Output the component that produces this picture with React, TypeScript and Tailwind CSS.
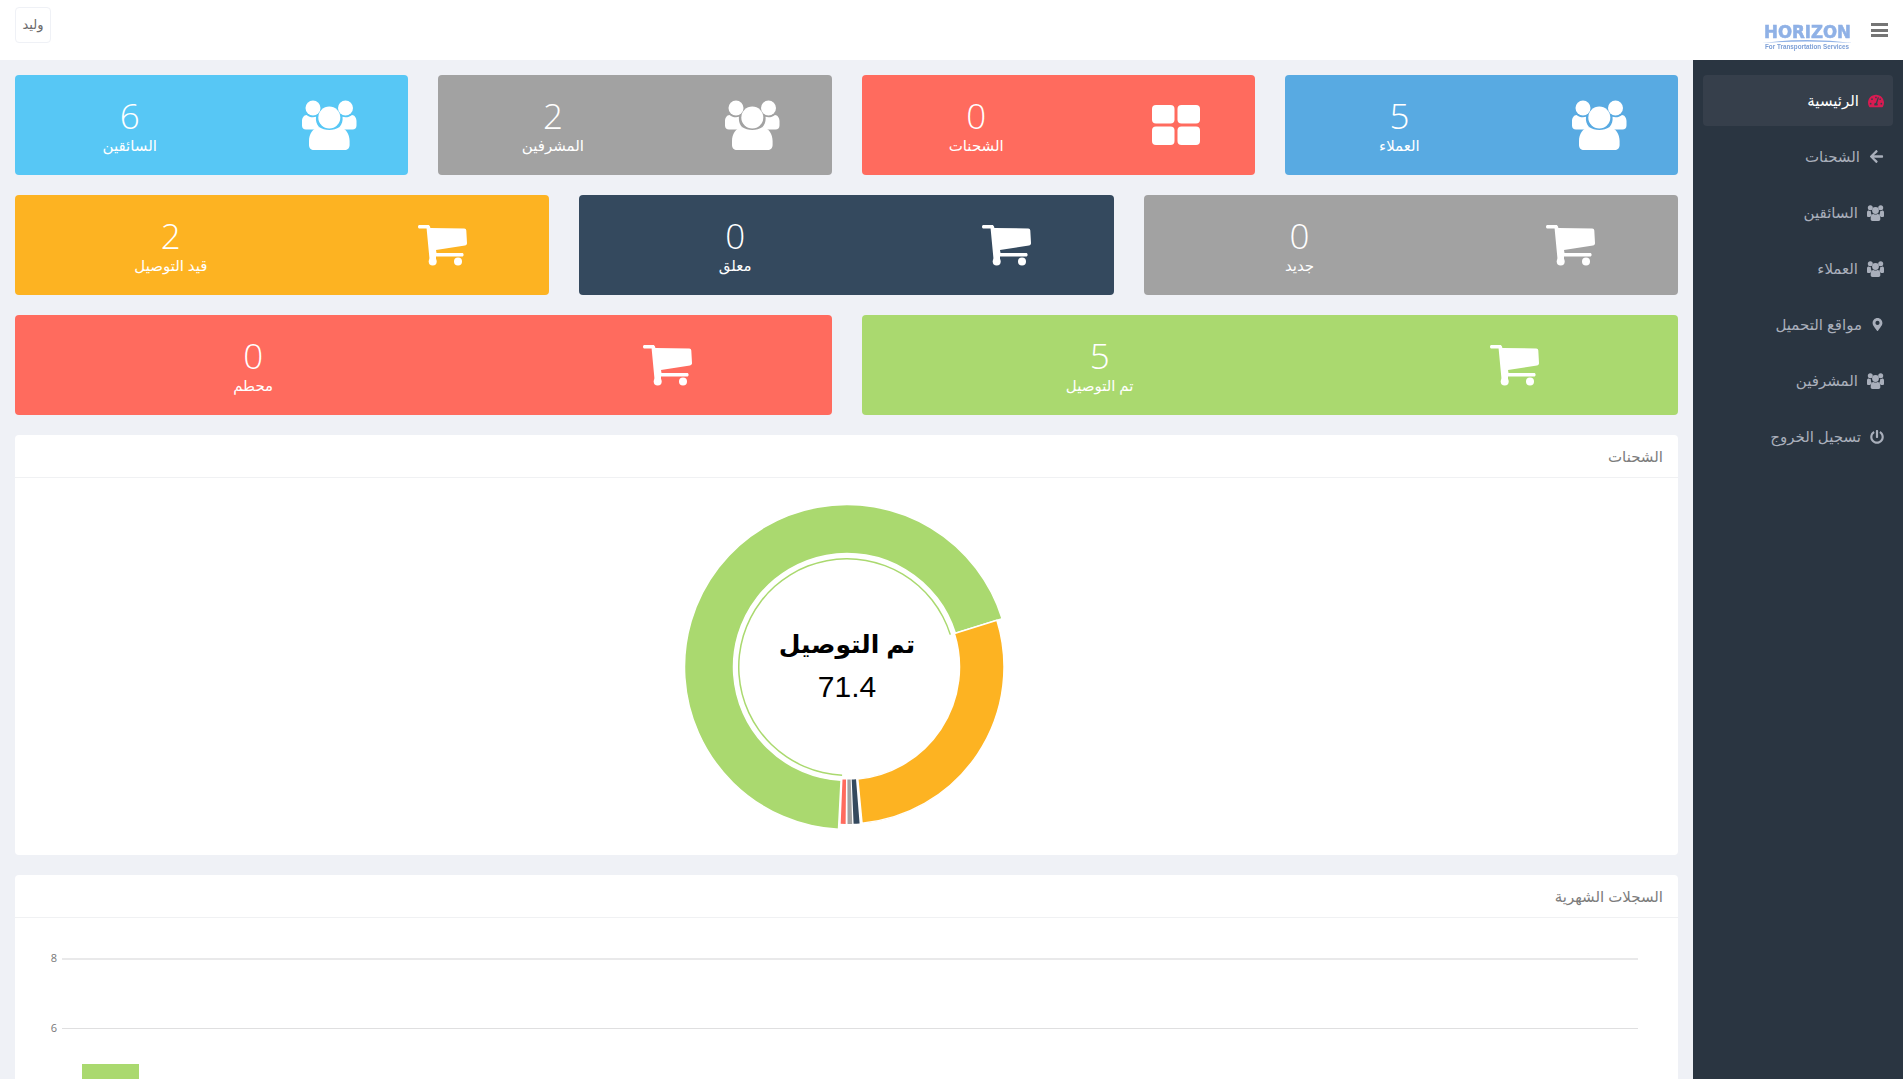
import { FaArrowLeft, FaMapMarkerAlt, FaPowerOff, FaTachometerAlt } from "react-icons/fa";

const FONT = "font-['Open_Sans','DejaVu_Sans',sans-serif]";

function GroupIcon() {
  return (
    <svg width="55" height="51" viewBox="0 0 55 51" fill="white">
      <circle cx="11" cy="8" r="7.500" />
      <circle cx="43.500" cy="8" r="7.500" />
      <path d="M0 21c0-3 2-6 4.500-6 2 1.500 4 2.300 6.500 2.300 1 0 2-.2 3-.5-.5 4 .5 7.500 3 10.200-1 .8-2 1.500-2.500 2.500H4c-2.500 0-4-1.500-4-4zM54.500 21c0-3-2-6-4.500-6-2 1.500-4 2.300-6.500 2.300-1 0-2-.2-3-.5.5 4-.5 7.500-3 10.200 1 .8 2 1.500 2.500 2.500h10.500c2.500 0 4-1.500 4-4z" />
      <circle cx="27.300" cy="17.500" r="11" />
      <path d="M7 41c0-7 4-13 10-14 3 2 6.500 3 10.300 3s7.200-1 10.300-3c6 1 10 7 10 14v4c0 3-2 5-5 5H12c-3 0-5-2-5-5z" />
    </svg>
  );
}

function CartIcon() {
  return (
    <svg width="50" height="41" viewBox="0 0 50 41" fill="white">
      <path d="M1.500 0H10c1 0 1.700.6 2 1.600L12.400 3l33.800.5c1.300 0 2 .8 2.100 2L49 18c.1 1.300-.7 2.200-2 2.400L18 25l.5 3H44c1 0 1.600.7 1.600 1.700S45 31.500 44 31.500H18V34h-6.500L8.600 3.500H1.500C.7 3.500 0 2.700 0 1.700S.7 0 1.500 0z" />
      <circle cx="14.700" cy="36.500" r="4" />
      <circle cx="40" cy="36.500" r="4" />
    </svg>
  );
}

function WidgetsIcon() {
  return (
    <svg width="48" height="40" viewBox="0 0 48 40" fill="white">
      <rect x="0" y="0" width="22.500" height="18.500" rx="4" />
      <rect x="25.500" y="0" width="22.500" height="18.500" rx="4" />
      <rect x="0" y="21.500" width="22.500" height="18.500" rx="4" />
      <rect x="25.500" y="21.500" width="22.500" height="18.500" rx="4" />
    </svg>
  );
}

// small three person glyph of the side menu
function UsersGlyph() {
  return (
    <svg width="17" height="16" viewBox="0 0 17 16" fill="#a9afbb">
      <circle cx="3.300" cy="2.800" r="2.500" />
      <circle cx="13.700" cy="2.800" r="2.500" />
      <path d="M0 7.500C0 6 .8 5.500 1.800 5.500c.8.600 1.500.8 2.200.7-.3 1.600.2 3 1.200 4-1 .4-1.700 1.100-2 1.800H1.300C.5 12 0 11.500 0 10.700zM17 7.500c0-1.500-.8-2-1.800-2-.8.600-1.500.8-2.200.7.300 1.600-.2 3-1.200 4 1 .4 1.700 1.100 2 1.800h1.900c.8 0 1.300-.5 1.300-1.300z" />
      <circle cx="8.500" cy="5.500" r="3.400" />
      <path d="M3.700 13c0-2 1.200-4 2.800-4 1.200.7 2.800.7 4 0 1.600 0 2.800 2 2.800 4v1.300c0 1-.7 1.700-1.700 1.700H5.400c-1 0-1.700-.7-1.700-1.700z" />
    </svg>
  );
}

function StatCard({ value, label, color, icon }: { value: string; label: string; color: string; icon: React.ReactNode }) {
  return (
    <div className={`${color} h-[100px] rounded-[4px] flex items-center text-white`} dir="ltr">
      <div className="w-7/12 flex flex-col items-center pt-[2px]">
        <div className="text-[35px] font-light leading-[38px]">{value}</div>
        <div className="text-[15px] leading-[20px]" dir="rtl">{label}</div>
      </div>
      <div className="w-5/12 pl-[1.7%] flex justify-center">{icon}</div>
    </div>
  );
}

function NavItem({ icon, label, active }: { icon: React.ReactNode; label: string; active?: boolean }) {
  return (
    <div className={`h-[51px] mb-[5px] pr-[9px] pl-3 rounded-[4px] flex items-center gap-[9px] text-[15px] ${active ? "bg-[#363f4b] text-white" : "text-[#a9afbb]"}`}>
      {icon}
      <span>{label}</span>
    </div>
  );
}

// donut slices, angles clockwise from 12 o'clock
function arc(cx: number, cy: number, r1: number, r2: number, a: number, b: number) {
  const p = (r: number, d: number) => {
    const t = ((d - 90) * Math.PI) / 180;
    return `${(cx + r * Math.cos(t)).toFixed(2)} ${(cy + r * Math.sin(t)).toFixed(2)}`;
  };
  const big = b - a > 180 ? 1 : 0;
  return `M${p(r2, a)}A${r2} ${r2} 0 ${big} 1 ${p(r2, b)}L${p(r1, b)}A${r1} ${r1} 0 ${big} 0 ${p(r1, a)}Z`;
}

function Donut() {
  const cx = 175;
  const cy = 170;
  return (
    <svg width="350" height="340" viewBox="0 0 350 340">
      <path d={arc(cx, cy, 113.500, 162.500, 183, 432.700)} fill="#aad96f" stroke="white" strokeWidth="1.500" />
      <path d={arc(cx, cy, 107.500, 109, 182.600, 432.600)} fill="#aad96f" />
      <path d={arc(cx, cy, 112.500, 157, 72.700, 174.500)} fill="#fdb322" stroke="white" strokeWidth="1.500" />
      <path d={arc(cx, cy, 112.500, 157, 175.400, 177.600)} fill="#34495e" />
      <path d={arc(cx, cy, 112.500, 157, 178.100, 179.800)} fill="#a2a2a2" />
      <path d={arc(cx, cy, 112.500, 157, 180.500, 182.300)} fill="#ff6b5e" />
      <text x={cx} y="156" textAnchor="middle" fontFamily="'Liberation Sans','DejaVu Sans',sans-serif" fontWeight="700" fontSize="25" fill="#000" direction="rtl">تم التوصيل</text>
      <text x={cx} y="200" textAnchor="middle" fontFamily="'Liberation Sans',sans-serif" fontSize="30" fill="#000">71.4</text>
    </svg>
  );
}

function Panel({ title, children }: { title: string; children: React.ReactNode }) {
  return (
    <div className="bg-white rounded-[4px] mb-[20px]">
      <div className="h-[43px] border-b border-[#f0f1f3] px-[15px] flex items-center text-[15px] text-[#7c7c7c]">{title}</div>
      {children}
    </div>
  );
}

export default function App() {
  const users = <GroupIcon />;
  const cart = <CartIcon />;
  return (
    <div dir="rtl" className={`${FONT} h-[1079px] overflow-hidden bg-[#eff1f6] flex flex-col`}>
      <header className="h-[60px] shrink-0 bg-white flex items-start justify-between">
        <div className="flex items-start">
          <div className="mt-[23px] mr-[15px] ml-[17px] flex flex-col gap-[2.500px]" dir="ltr">
            <span className="block h-[3px] w-[17px] bg-[#757575]" />
            <span className="block h-[3px] w-[17px] bg-[#757575]" />
            <span className="block h-[3px] w-[17px] bg-[#757575]" />
          </div>
          <svg width="92" height="38" viewBox="0 0 92 38" className="mt-[15px] overflow-visible blur-[0.5px]">
            <text x="2" y="23" fontFamily="'DejaVu Sans',sans-serif" fontWeight="800" fontSize="18" textLength="87" lengthAdjust="spacingAndGlyphs" fill="#8fb1e6" stroke="#8fb1e6" strokeWidth="0.6" direction="ltr">HORIZON</text>
            <path d="M0 28Q45 22 91 28Q45 25 0 28Z" fill="#8fb1e6" />
            <text x="3" y="34" fontFamily="'Liberation Sans',sans-serif" fontWeight="700" fontSize="6.500" textLength="84" lengthAdjust="spacingAndGlyphs" fill="#7d9fd6" direction="ltr">For Transportation Services</text>
          </svg>
        </div>
        <div className="ml-[15px] mt-[7px] w-[36px] h-[36px] rounded-[4px] border border-[#eff1f6] flex items-center justify-center text-[13px] text-[#6b6b6b]">وليد</div>
      </header>
      <div className="flex flex-1 min-h-0">
        <aside className="w-[210px] shrink-0 bg-[#2a3541] pt-[15px] pr-[10px] pl-[10px]">
          <NavItem active label="الرئيسية" icon={<FaTachometerAlt className="text-[#d81b52] text-[16px]" />} />
          <NavItem label="الشحنات" icon={<FaArrowLeft className="text-[#a9afbb] text-[15px]" />} />
          <NavItem label="السائقين" icon={<UsersGlyph />} />
          <NavItem label="العملاء" icon={<UsersGlyph />} />
          <NavItem label="مواقع التحميل" icon={<FaMapMarkerAlt className="text-[#a9afbb] text-[13px]" />} />
          <NavItem label="المشرفين" icon={<UsersGlyph />} />
          <NavItem label="تسجيل الخروج" icon={<FaPowerOff className="text-[#a9afbb] text-[14px]" />} />
        </aside>
        <main className="flex-1 min-w-0 pt-[15px] px-[15px]">
          <div className="grid grid-cols-4 gap-x-[30px] mb-[20px]">
            <StatCard value="5" label="العملاء" color="bg-[#58aae2]" icon={users} />
            <StatCard value="0" label="الشحنات" color="bg-[#ff6b5e]" icon={<WidgetsIcon />} />
            <StatCard value="2" label="المشرفين" color="bg-[#a2a2a2]" icon={users} />
            <StatCard value="6" label="السائقين" color="bg-[#57c7f5]" icon={users} />
          </div>
          <div className="grid grid-cols-3 gap-x-[30px] mb-[20px]">
            <StatCard value="0" label="جديد" color="bg-[#a2a2a2]" icon={cart} />
            <StatCard value="0" label="معلق" color="bg-[#34495e]" icon={cart} />
            <StatCard value="2" label="قيد التوصيل" color="bg-[#fdb322]" icon={cart} />
          </div>
          <div className="grid grid-cols-2 gap-x-[30px] mb-[20px]">
            <StatCard value="5" label="تم التوصيل" color="bg-[#aad96f]" icon={cart} />
            <StatCard value="0" label="محطم" color="bg-[#ff6b5e]" icon={cart} />
          </div>
          <Panel title="الشحنات">
            <div className="h-[377px] flex items-center justify-center">
              <Donut />
            </div>
          </Panel>
          <Panel title="السجلات الشهرية">
            <div className="h-[300px] pt-[40px] pl-[27px] pr-[40px]" dir="ltr">
              <div className="flex items-center h-[1px] text-[#777]">
                <span className="w-[15px] mr-[5px] text-[11px] text-right">8</span>
                <div className="flex-1 h-[2px] bg-[#e9e9ea]" />
              </div>
              <div className="flex items-center h-[1px] mt-[69px] text-[#777]">
                <span className="w-[15px] mr-[5px] text-[11px] text-right">6</span>
                <div className="flex-1 h-[1px] bg-[#dfdfe0]" />
              </div>
              <div className="ml-[40px] mt-[35px] w-[57px] h-[60px] bg-[#aad96f]" />
            </div>
          </Panel>
        </main>
      </div>
    </div>
  );
}
